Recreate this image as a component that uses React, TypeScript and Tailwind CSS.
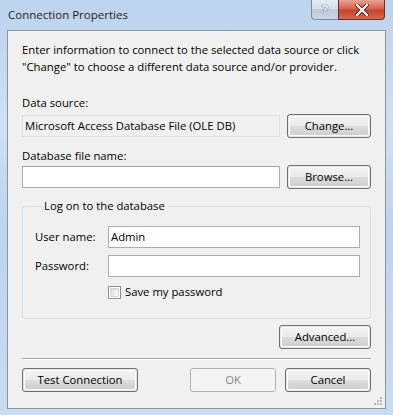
import React from "react";

const font = { fontFamily: '"Open Sans", "Noto Sans", sans-serif' };

function Btn({ children, w, disabled }: { children: React.ReactNode; w: string; disabled?: boolean }) {
  if (disabled) {
    return (
      <div className={`${w} h-[24px] rounded-[3px] border border-[#adb2b5] bg-[#f4f4f4] flex items-center justify-center text-[#838383]`}>
        {children}
      </div>
    );
  }
  return (
    <div className={`${w} h-[24px] rounded-[3px] border border-[#707070] p-px bg-[#e6e6e6]`}>
      <div className="w-full h-full rounded-[2px] border border-[#fcfcfc] bg-[linear-gradient(to_bottom,#f2f2f2_0%,#ebebeb_50%,#dddddd_50%,#cfcfcf_100%)] flex items-center justify-center text-black">
        {children}
      </div>
    </div>
  );
}

export default function App() {
  return (
    <div
      className="w-[393px] h-[415px] overflow-hidden bg-[linear-gradient(to_bottom,#bcd3ec_0%,#cfe0f2_30%,#bcd4ed_55%,#c9dcf1_100%)] text-[11.3px] whitespace-nowrap flex flex-col"
      style={font}
    >
      {/* title bar */}
      <div className="h-[30px] shrink-0 flex items-start justify-between pl-[8px] pr-[8px]">
        <div className="pt-[6px] text-[#1e1e1e] text-[11.5px]">Connection Properties</div>
        <div className="flex">
          <div className="w-[27px] h-[20px] rounded-bl-[4px] border border-[#7d8b9a] border-t-0 border-r-0 bg-[linear-gradient(to_bottom,#e4ebf3_0%,#d3deea_50%,#bccadb_50%,#c9d6e5_100%)] flex items-center justify-center">
            <span className="text-[13px] font-bold text-[#f4f6f9] leading-none [text-shadow:0_0_1px_#44546a,0_0_1px_#44546a]">?</span>
          </div>
          <div className="w-[47px] h-[20px] rounded-br-[4px] border border-[#6b2e2a] border-t-0 bg-[linear-gradient(to_bottom,#e8a394_0%,#d8624e_45%,#c8422d_55%,#d66a4f_100%)] flex items-center justify-center">
            <svg width="14" height="12" viewBox="0 0 14 12">
              <path d="M2 1 L12 11 M12 1 L2 11" stroke="#5a2018" strokeWidth="4" strokeLinecap="square" />
              <path d="M2 1 L12 11 M12 1 L2 11" stroke="#ffffff" strokeWidth="2.2" strokeLinecap="square" />
            </svg>
          </div>
        </div>
      </div>

      {/* client area */}
      <div className="mx-[7px] h-[379px] shrink-0 border border-[#8795a6] bg-[#f0f0f0] pl-[14px] pr-[14px] pt-[10px] flex flex-col relative">
        <p className="leading-[17px] text-black">
          Enter information to connect to the selected data source or click
          <br />
          "Change" to choose a different data source and/or provider.
        </p>

        <div className="mt-[20px] leading-[16px]">Data source:</div>
        <div className="mt-[3px] flex items-center justify-between">
          <div className="w-[258px] h-[22px] border border-[#e0e0e0] bg-[#f0f0f0] flex items-center pl-[2px]">
            Microsoft Access Database File (OLE DB)
          </div>
          <Btn w="w-[84px]">Change...</Btn>
        </div>

        <div className="mt-[10px] leading-[16px]">Database file name:</div>
        <div className="mt-[1px] flex items-center justify-between">
          <div className="w-[258px] h-[22px] border border-[#abadb3] border-t-[#a0a4a8] bg-white"></div>
          <Btn w="w-[84px]">Browse...</Btn>
        </div>

        <fieldset className="mt-[9px] h-[121px] border border-[#d5dfe5] rounded-[3px] pl-[12px] pr-[10px]">
          <legend className="ml-[6px] px-[3px] leading-[16px]">Log on to the database</legend>
          <div className="mt-[12px] flex items-center">
            <div className="w-[73px]">User name:</div>
            <div className="flex-1 h-[22px] border border-[#abadb3] bg-white flex items-center pl-[2px]">Admin</div>
          </div>
          <div className="mt-[7px] flex items-center">
            <div className="w-[73px]">Password:</div>
            <div className="flex-1 h-[22px] border border-[#abadb3] bg-white"></div>
          </div>
          <div className="mt-[8px] ml-[73px] flex items-center gap-[4px]">
            <div className="w-[13px] h-[13px] border border-[#8e8f8f] p-px bg-white">
              <div className="w-full h-full bg-[linear-gradient(135deg,#dcdcdc,#fbfbfb)] border border-[#d4d4d4]"></div>
            </div>
            <span className="leading-[14px]">Save my password</span>
          </div>
        </fieldset>

        <div className="mt-[6px] flex justify-end">
          <Btn w="w-[92px]">Advanced...</Btn>
        </div>

        <div className="mt-[9px] h-[2px] border-t border-[#a0a0a0] border-b border-b-white"></div>

        <div className="mt-[8px] flex items-center">
          <Btn w="w-[116px]">Test Connection</Btn>
          <div className="ml-auto flex gap-[9px]">
            <Btn w="w-[86px]" disabled>OK</Btn>
            <Btn w="w-[86px]">Cancel</Btn>
          </div>
        </div>

        <svg className="absolute right-[2px] bottom-[2px]" width="10" height="10" viewBox="0 0 10 10">
          <g fill="#b8b8b8">
            <rect x="7" y="1" width="2" height="2" />
            <rect x="4" y="4" width="2" height="2" />
            <rect x="7" y="4" width="2" height="2" />
            <rect x="1" y="7" width="2" height="2" />
            <rect x="4" y="7" width="2" height="2" />
            <rect x="7" y="7" width="2" height="2" />
          </g>
        </svg>
      </div>
    </div>
  );
}
